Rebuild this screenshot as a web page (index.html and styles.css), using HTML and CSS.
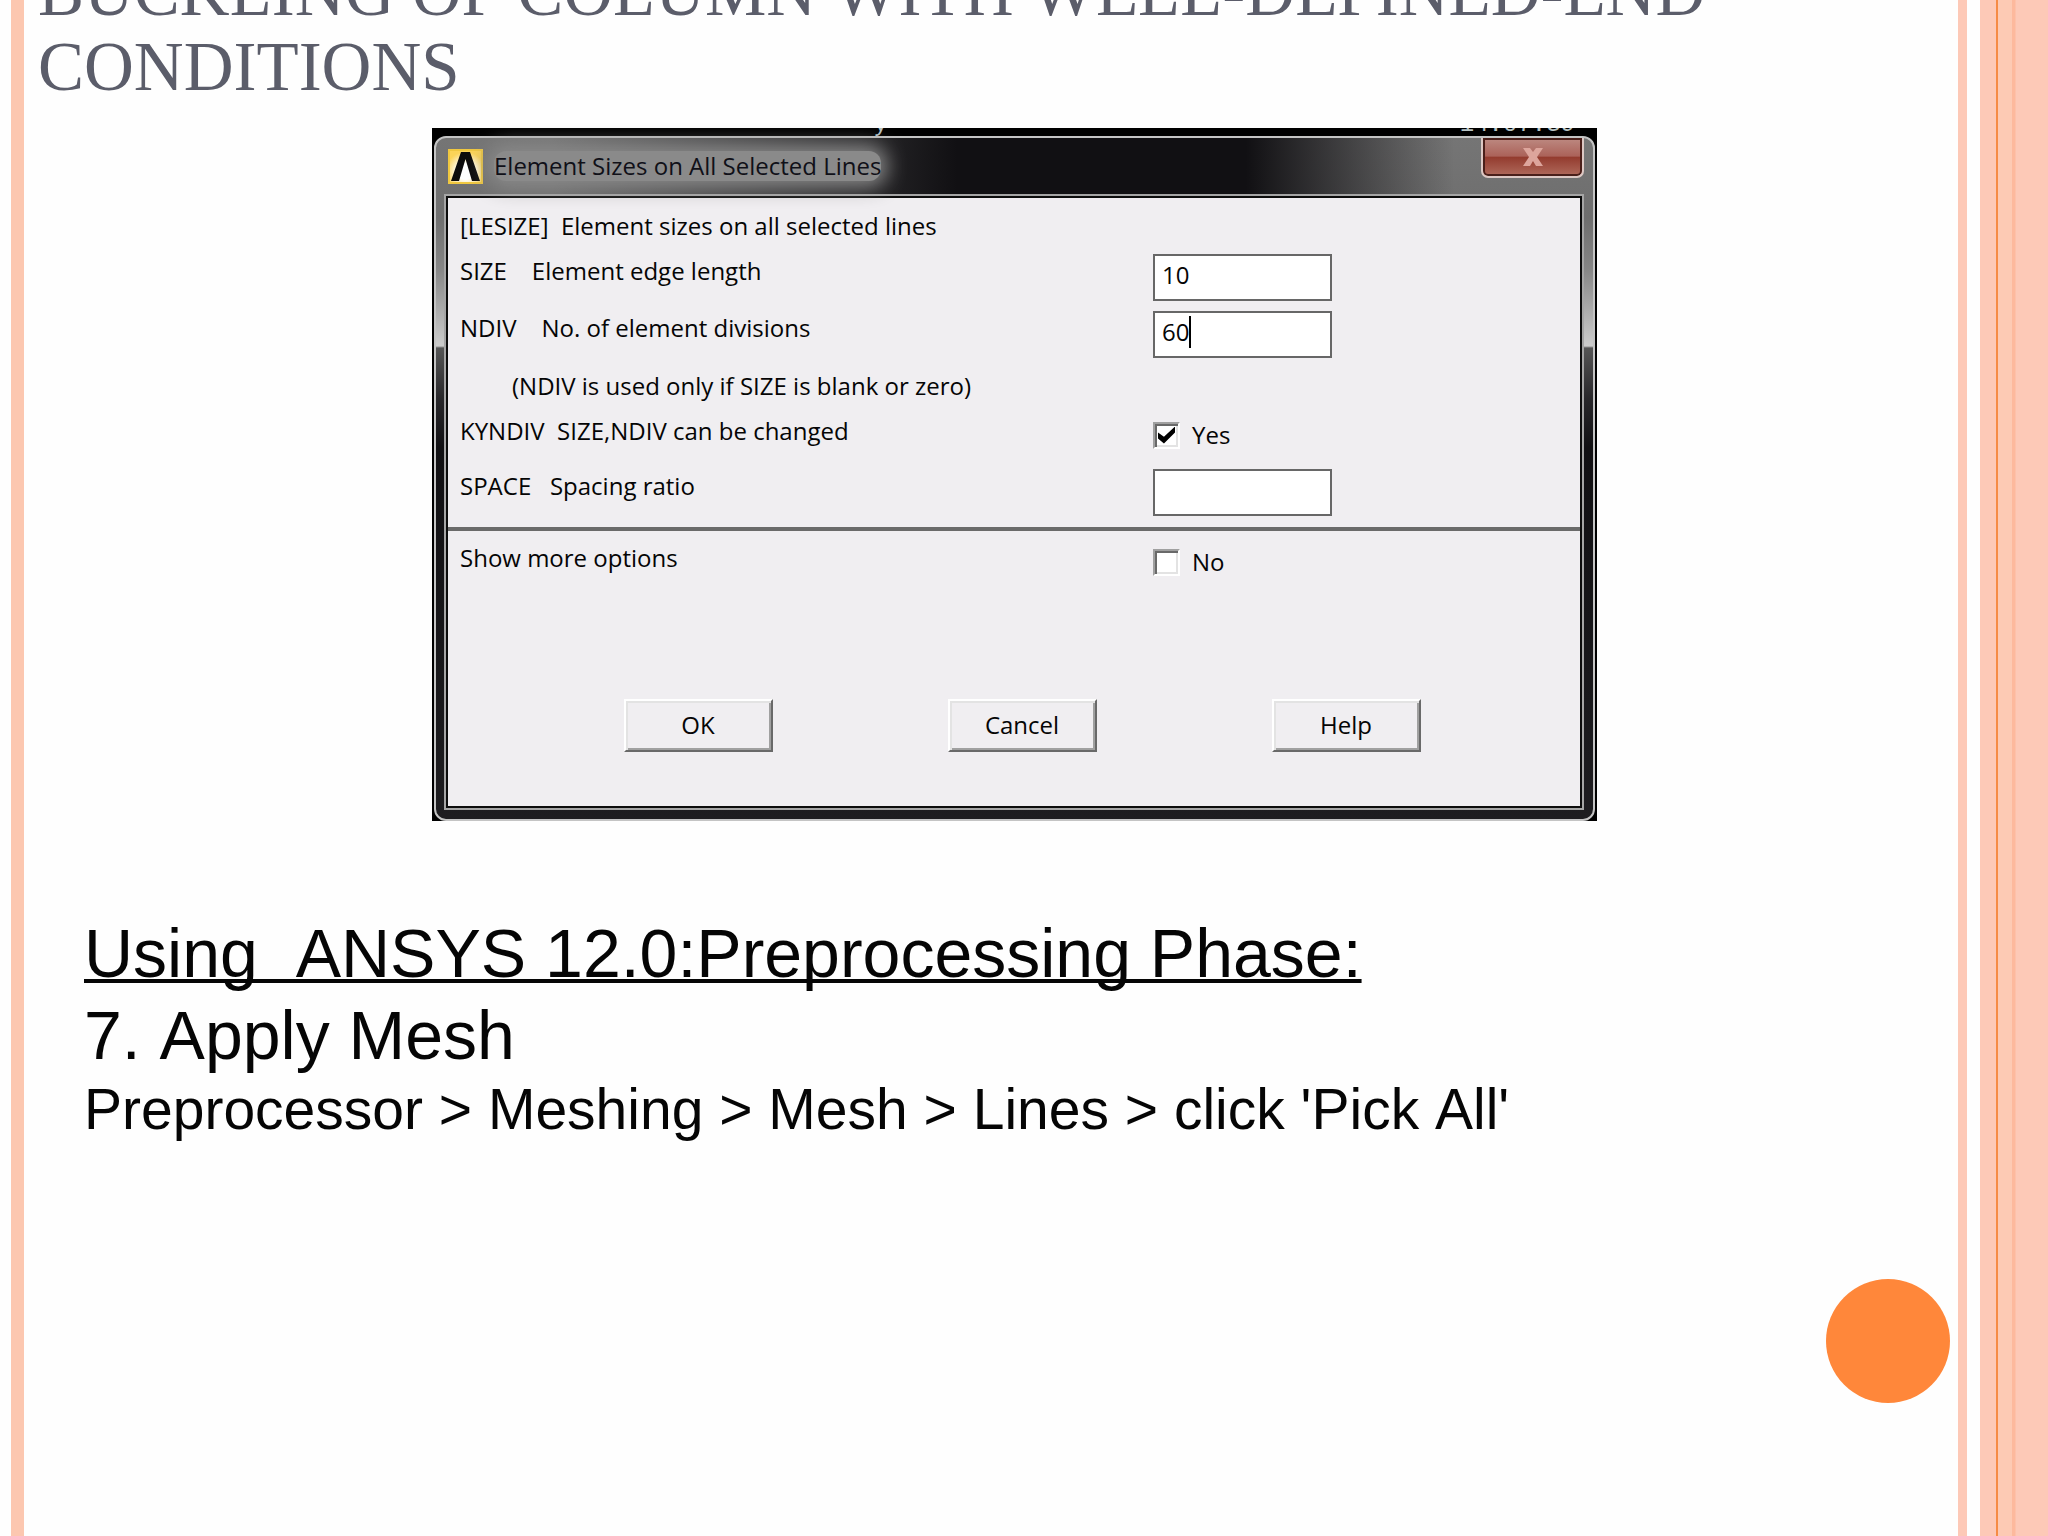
FILE: index.html
```html
<!DOCTYPE html>
<html lang="en">
<head>
<meta charset="utf-8">
<title>Buckling of column with well-defined-end conditions</title>
<link rel="stylesheet" href="styles.css">
</head>
<body>
<div class="slide">
  <div class="stripe stripe-left"></div>
  <main class="content">
    <h1 class="title">BUCKLING OF COLUMN WITH WELL-DEFINED-END CONDITIONS</h1>
    <section class="capture">
      <div class="backdrop"><span>y</span><span>14:07:39</span></div>
      <div class="window">
        <header class="titlebar">
          <svg class="app-icon" viewBox="0 0 35 35" aria-hidden="true">
            <defs>
              <radialGradient id="glow" cx="50%" cy="65%" r="60%">
                <stop offset="0.4" stop-color="#ffffff"/>
                <stop offset="1" stop-color="#fbd458"/>
              </radialGradient>
            </defs>
            <rect x="1" y="1" width="33" height="33" fill="url(#glow)" stroke="#f0c840" stroke-width="2"/>
            <path d="M3 32 L13 3 H22 L32 32 H24 L17.500 10 L11 32 Z" fill="#0c0c0c"/>
          </svg>
          <h2 class="window-title">Element Sizes on All Selected Lines</h2>
          <button class="close" type="button" aria-label="Close">
            <svg viewBox="0 0 20 18" aria-hidden="true"><path d="M0 0 H7 L10 4 L13 0 H20 L14 9 L20 18 H13 L10 13 L7 18 H0 L6 9 Z" fill="#dda59c"/></svg>
          </button>
        </header>
        <form class="dialog">
          <div class="fields">
            <p class="intro">[LESIZE]  Element sizes on all selected lines</p>
            <label for="size">SIZE    Element edge length</label>
            <div class="control"><input class="box" id="size" type="text" value="10"></div>
            <label for="ndiv">NDIV    No. of element divisions</label>
            <div class="control"><input class="box" id="ndiv" type="text" value="60"><span class="caret"></span></div>
            <p class="intro note">(NDIV is used only if SIZE is blank or zero)</p>
            <label for="kyndiv">KYNDIV  SIZE,NDIV can be changed</label>
            <label class="control check"><input id="kyndiv" type="checkbox" checked>Yes</label>
            <label for="space">SPACE   Spacing ratio</label>
            <div class="control"><input class="box" id="space" type="text"></div>
          </div>
          <div class="fields more">
            <label for="more">Show more options</label>
            <label class="control check"><input id="more" type="checkbox">No</label>
          </div>
          <div class="actions">
            <button class="action" type="button">OK</button>
            <button class="action" type="button">Cancel</button>
            <button class="action" type="button">Help</button>
          </div>
        </form>
      </div>
    </section>
    <section class="steps">
      <p class="phase">Using  ANSYS 12.0:Preprocessing Phase:</p>
      <p>7. Apply Mesh</p>
      <p class="path">Preprocessor &gt; Meshing &gt; Mesh &gt; Lines &gt; click 'Pick All'</p>
    </section>
    <div class="dot"></div>
  </main>
  <div class="stripe stripe-thin"></div>
  <div class="stripe stripe-wide"></div>
</div>
</body>
</html>
```
FILE: styles.css
```css
* { box-sizing: border-box; }

body {
  margin: 0;
  background: #fefefe;
  color: #050505;
  font-family: "Liberation Sans", Arial, sans-serif;
  font-kerning: none;
}

h1, h2, p { margin: 0; font-weight: normal; }

.slide {
  display: flex;
  min-height: 100vh;
  overflow: hidden;
}

.stripe { flex: none; background: #fdc9b7; }
.stripe-left { width: 13px; margin-left: 11px; background: #fcc7b0; }
.stripe-thin { width: 9px; }
.stripe-wide {
  width: 68px;
  margin-left: 13px;
  background: linear-gradient(to right, #fdc9b7 16px, #f68b45 16px 18px, #fdcab4 18px 32px, #fdb99d 32px 35px, #fdc9b7 36px);
}

.content {
  flex: 1;
  min-width: 0;
  display: flex;
  flex-direction: column;
}

.title {
  margin-top: -45px;
  padding: 0 14px;
  color: #5b5d6a;
  font-family: "Liberation Serif", "Times New Roman", serif;
  font-size: 69px;
  line-height: 75px;
}

/* Captured dialog window */
.capture {
  width: 1165px;
  max-width: 100%;
  margin: 23px 0 0 408px;
  padding: 0 2px;
  background: #000;
  font-family: "Open Sans", "Noto Sans", sans-serif;
  font-size: 24px;
  line-height: 30px;
}

.backdrop {
  display: flex;
  justify-content: flex-end;
  align-items: flex-end;
  gap: 572px;
  height: 8px;
  padding-right: 20px;
  overflow: hidden;
  color: #b8c4c4;
  font-family: "Liberation Mono", monospace;
  line-height: 22px;
}

.window {
  padding: 0 11px 11px 10px;
  border: 2px solid #c4c4c4;
  border-radius: 12px;
  background:
    linear-gradient(to right, transparent 10%, #111013 45% 70%, transparent 88%) top / 100% 58px no-repeat,
    linear-gradient(#757575 0, #6e6e6e 80px, #858585 130px, #cccccc 208px, #555555 210px, #29282b 260px, #111013 310px, #1e1d20 100%);
}

.titlebar {
  display: flex;
  align-items: center;
  gap: 2px;
  height: 58px;
  padding: 0 0 2px 2px;
}

.app-icon { flex: none; width: 35px; height: 35px; }

.window-title {
  margin-left: 9px;
  border-radius: 12px;
  background: #8a8a8a;
  box-shadow: 0 0 20px 6px #8a8a8a;
  color: #101018;
  font-size: 24px;
  line-height: 30px;
}

.close {
  display: grid;
  place-items: center;
  align-self: flex-start;
  width: 103px;
  height: 40px;
  margin: 0 -2px 0 auto;
  padding: 0;
  border: 2px solid #dcc8c4;
  border-top: 0;
  border-radius: 0 0 7px 7px;
  background: linear-gradient(#bd8a82, #ab6259 48%, #933b2e 50%, #b06a5c);
  box-shadow: inset 0 0 0 2px #4a1f1a;
}

.close svg { width: 20px; height: 18px; }

.dialog {
  border: 2px solid #0c0c0c;
  outline: 2px solid #a5a5a5;
  background: #f0eef1;
}

.fields {
  display: grid;
  grid-template-columns: 1fr 427px;
  grid-template-rows: 43px 57px 58px 45px 55px 58px;
  padding: 13px 0 0 12px;
  border-bottom: 4px solid #6a6a6a;
  white-space: pre;
}

.fields > * { padding-top: 2px; }
.fields > .intro { grid-column: 1 / -1; padding-top: 0; }
.fields > .note { padding: 2px 0 0 52px; }
.fields > .control { position: relative; padding-top: 0; }

.box {
  display: block;
  width: 179px;
  height: 47px;
  padding: 0 7px 6px;
  border: 2px solid #676767;
  background: #fff;
  color: inherit;
  font: inherit;
}

.caret {
  position: absolute;
  left: 36px;
  top: 5px;
  width: 2px;
  height: 32px;
  background: #000;
}

.fields > .check {
  display: flex;
  align-items: center;
  align-self: start;
  gap: 12px;
  padding-top: 6px;
}

.check input {
  appearance: none;
  width: 27px;
  height: 27px;
  margin: 0;
  border: 2px solid;
  border-color: #a0a0a0 #fff #fff #a0a0a0;
  background: #fff;
  box-shadow: inset 2px 2px #696969, inset -2px -2px #e3e3e3;
}

.check input:checked::before {
  content: "";
  display: block;
  width: 17px;
  height: 17px;
  margin: 3px;
  background: #000;
  clip-path: polygon(0 35%, 35% 60%, 100% 0, 100% 35%, 35% 100%, 0 70%);
}

.more {
  grid-template-rows: 55px;
  padding-top: 10px;
  border: 0;
}

.actions {
  display: flex;
  justify-content: center;
  gap: 175px;
  padding: 103px 0 54px 16px;
}

.action {
  width: 149px;
  height: 53px;
  padding: 0 0 2px;
  border: 2px solid;
  border-color: #fff #696969 #696969 #fff;
  background: #f0eef1;
  box-shadow: inset 2px 2px #e3e3e3, inset -2px -2px #a0a0a0;
  color: inherit;
  font: inherit;
}

/* Slide text */
.steps {
  margin-top: 91px;
  padding-left: 60px;
  font-size: 68px;
  line-height: 82px;
}

.steps p { white-space: pre-wrap; }

.phase {
  text-decoration: underline;
  text-decoration-thickness: 4px;
  text-decoration-skip-ink: none;
}

.steps .path { font-size: 57px; line-height: 66px; }

.dot {
  align-self: flex-end;
  width: 124px;
  height: 124px;
  margin: 137px 8px 0 0;
  border-radius: 50%;
  background: #ff873a;
}
```
